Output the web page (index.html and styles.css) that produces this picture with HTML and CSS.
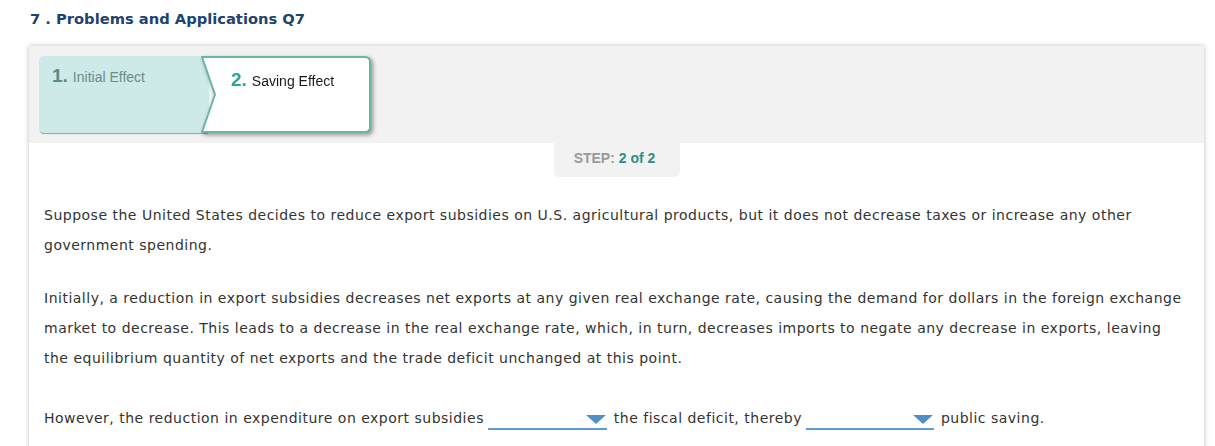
FILE: index.html
```html
<!DOCTYPE html>
<html>
<head>
<meta charset="utf-8">
<link rel="stylesheet" href="styles.css">
</head>
<body>
<div class="page">
  <h1 class="title">7 . Problems and Applications Q7</h1>
  <div class="card">
    <div class="tabbar">
      <div class="tabs">
        <div class="tab tab-done">
          <span class="num">1.</span><span class="label">Initial Effect</span>
        </div>
        <div class="tab tab-active">
          <svg class="tab-bg" width="172" height="78" viewBox="0 0 172 78">
            <path d="M1 1 H164 Q169 1 169 6 V71 Q169 76 164 76 H1 L14 38.5 Z" fill="#ffffff" stroke="#6bb5a4" stroke-width="2" stroke-linejoin="round"/>
          </svg>
          <span class="num">2.</span><span class="label">Saving Effect</span>
        </div>
      </div>
    </div>
    <div class="step-row">
      <div class="step">STEP: <span class="step-count">2 of 2</span></div>
    </div>
    <div class="content">
      <p class="para p1">Suppose the United States decides to reduce export subsidies on U.S. agricultural products, but it does not decrease taxes or increase any other government spending.</p>
      <p class="para p2">Initially, a reduction in export subsidies decreases net exports at any given real exchange rate, causing the demand for dollars in the foreign exchange market to decrease. This leads to a decrease in the real exchange rate, which, in turn, decreases imports to negate any decrease in exports, leaving the equilibrium quantity of net exports and the trade deficit unchanged at this point.</p>
      <p class="para p3">However, the reduction in expenditure on export subsidies <span class="select sel1"><span class="caret"></span></span> the fiscal deficit, thereby <span class="select sel2"><span class="caret"></span></span> public saving.</p>
    </div>
  </div>
</div>
</body>
</html>
```
FILE: styles.css
```css
* { box-sizing: border-box; }
html, body { margin: 0; padding: 0; background: #ffffff; }
.page {
  padding: 9px 11px 0 29px;
}
.title {
  margin: 0 0 0 1px;
  font-family: "DejaVu Sans", Verdana, sans-serif;
  font-size: 14.7px;
  font-weight: bold;
  color: #1d446e;
  line-height: 20px;
}
.card {
  margin-top: 17px;
  width: 1175px;
  background: #ffffff;
  box-shadow: 0 0 5px rgba(0,0,0,0.25);
  height: 420px;
}
.tabbar {
  background: #f2f2f2;
  height: 97px;
  padding: 10px 10px 0 10px;
}
.tabs {
  display: flex;
  align-items: flex-start;
}
.tab {
  height: 77px;
  font-family: "Liberation Sans", Arial, sans-serif;
  display: flex;
  align-items: baseline;
}
.tab-done {
  width: 170px;
  background: #cdeae8;
  border-radius: 5px 0 0 5px;
  box-shadow: 0 2px 1px -1px rgba(0,0,0,0.35);
  padding: 9px 0 0 13px;
}
.tab-active {
  position: relative;
  width: 172px;
  margin-left: -8px;
  padding: 13px 0 0 30px;
  filter: drop-shadow(2px 2px 2px rgba(0,0,0,0.4));
}
.tab-bg {
  position: absolute;
  left: 0;
  top: 0;
  z-index: 0;
}
.tab .num, .tab .label { position: relative; z-index: 1; }
.num {
  font-size: 19px;
  font-weight: bold;
  margin-right: 5px;
}
.label { font-size: 14px; }
.tab-done .num { color: #5d8883; }
.tab-done .label { color: #6c8c88; }
.tab-active .num { color: #2aa791; }
.tab-active .label { color: #1a1a1a; }

.step-row {
  display: flex;
  justify-content: center;
}
.step {
  width: 126px;
  height: 34px;
  background: #f2f2f2;
  border-radius: 0 0 5px 5px;
  font-family: "Liberation Sans", Arial, sans-serif;
  font-size: 14px;
  font-weight: bold;
  color: #999999;
  text-align: center;
  line-height: 30px;
  padding-right: 4px;
}
.step-count { color: #2d8f84; }

.content {
  padding: 0 15px;
  font-family: "DejaVu Sans", Verdana, sans-serif;
  font-size: 14px;
  letter-spacing: 0.5px;
  color: #333333;
  line-height: 30px;
}
.para { margin: 0; }
.p1 { margin-top: 23px; }
.p2 { margin-top: 23px; }
.p3 { margin-top: 30px; }
.select {
  display: inline-block;
  position: relative;
  width: 119px;
  height: 20px;
  border-bottom: 2px solid #5b9bd1;
  vertical-align: -7px;
  margin: 0 2px 0 -1px;
}
.sel2 { width: 128px; }
.caret {
  position: absolute;
  right: 1px;
  top: 5px;
  width: 0;
  height: 0;
  border-left: 10px solid transparent;
  border-right: 10px solid transparent;
  border-top: 9px solid #4f8fc8;
}
```
